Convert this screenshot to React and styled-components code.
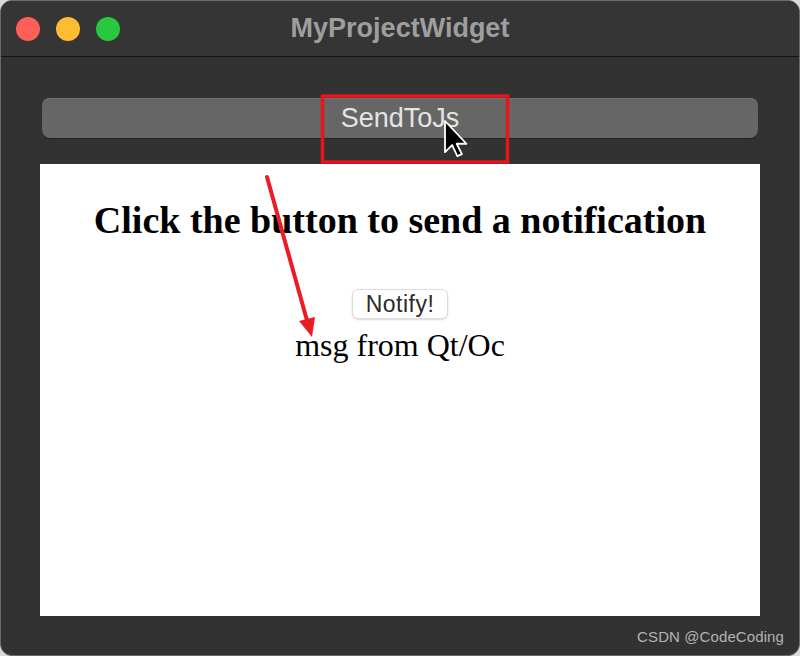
import styled, { createGlobalStyle } from "styled-components";

const GlobalStyle = createGlobalStyle`
  html, body {
    margin: 0;
    padding: 0;
    background: #d9d9d9;
  }
  * {
    box-sizing: border-box;
  }
`;

const Window = styled.div`
  position: relative;
  width: 800px;
  height: 656px;
  display: flex;
  flex-direction: column;
  background: #323232;
  border: 1px solid #6a6a6a;
  border-radius: 12px;
  overflow: hidden;
  font-family: "Liberation Sans", Arial, sans-serif;
`;

const TitleBar = styled.div`
  height: 56px;
  display: grid;
  grid-template-columns: 1fr auto 1fr;
  align-items: center;
  background: #353535;
  border-bottom: 1px solid #141414;
`;

const Lights = styled.div`
  display: flex;
  gap: 16px;
  padding-left: 15px;
`;

const Light = styled.span`
  width: 24px;
  height: 24px;
  border-radius: 50%;
  background: ${(p) => p.$color};
`;

const Title = styled.div`
  font-size: 27px;
  font-weight: bold;
  color: #9e9e9e;
  padding-bottom: 1px;
`;

const Content = styled.div`
  flex: 1;
  display: flex;
  flex-direction: column;
  padding: 0 39px;
`;

const SendButton = styled.button`
  margin: 41px 2px 0;
  height: 40px;
  border: none;
  border-radius: 8px;
  background: #666666;
  box-shadow: inset 0 1px 0 #707070, 0 1px 1px rgba(0, 0, 0, 0.35);
  color: #e4e4e4;
  font-family: "Liberation Sans", Arial, sans-serif;
  font-size: 27px;
  padding: 0;
`;

const WebView = styled.div`
  margin-top: 26px;
  height: 452px;
  background: #ffffff;
  display: flex;
  flex-direction: column;
  align-items: center;
  padding-top: 35px;
  font-family: "Liberation Serif", "Times New Roman", serif;
  color: #000;
`;

const Heading = styled.h1`
  margin: 0;
  font-size: 38px;
  font-weight: bold;
  line-height: 42px;
`;

const NotifyButton = styled.button`
  margin-top: 48px;
  height: 30px;
  padding: 0 13px;
  background: #fff;
  border: 1px solid #dcdcdc;
  border-radius: 6px;
  box-shadow: 0 1px 2px rgba(0, 0, 0, 0.15);
  font-family: "Liberation Sans", Arial, sans-serif;
  font-size: 23px;
  letter-spacing: 0.5px;
  color: #2a2a2a;
`;

const Message = styled.div`
  margin-top: 8px;
  font-size: 32px;
  line-height: 36px;
`;

const Footer = styled.div`
  flex: 1;
  padding: 12px 15px 0 0;
  text-align: right;
  font-size: 15px;
  letter-spacing: 0.1px;
  color: #b2b2b2;
`;

const Overlay = styled.svg`
  position: absolute;
  left: -1px;
  top: -1px;
  width: 800px;
  height: 656px;
  pointer-events: none;
`;

export default function App() {
  return (
    <>
      <GlobalStyle />
      <Window>
        <TitleBar>
          <Lights>
            <Light $color="#fe5f57" />
            <Light $color="#febc2e" />
            <Light $color="#28c840" />
          </Lights>
          <Title>MyProjectWidget</Title>
          <div />
        </TitleBar>
        <Content>
          <SendButton>SendToJs</SendButton>
          <WebView>
            <Heading>Click the button to send a notification</Heading>
            <NotifyButton>Notify!</NotifyButton>
            <Message>msg from Qt/Oc</Message>
          </WebView>
        </Content>
        <Footer>CSDN @CodeCoding</Footer>

        {/* annotations drawn over the screenshot */}
        <Overlay viewBox="0 0 800 656">
          <rect
            x="322.5"
            y="96"
            width="185"
            height="66"
            fill="none"
            stroke="#e8141c"
            strokeWidth="3.5"
          />
          <line
            x1="267"
            y1="177"
            x2="308"
            y2="324"
            stroke="#ec1c24"
            strokeWidth="4"
            strokeLinecap="round"
          />
          <polygon points="312,337 299,321 315,317" fill="#ec1c24" />
          <path
            transform="translate(445 121) scale(1.3)"
            d="M0 0 L0 24 L5.5 18.5 L9.5 27 L13 25.5 L9 17.5 L16.5 17.5 Z"
            fill="#000"
            stroke="#fff"
            strokeWidth="1.4"
            strokeLinejoin="round"
          />
        </Overlay>
      </Window>
    </>
  );
}
